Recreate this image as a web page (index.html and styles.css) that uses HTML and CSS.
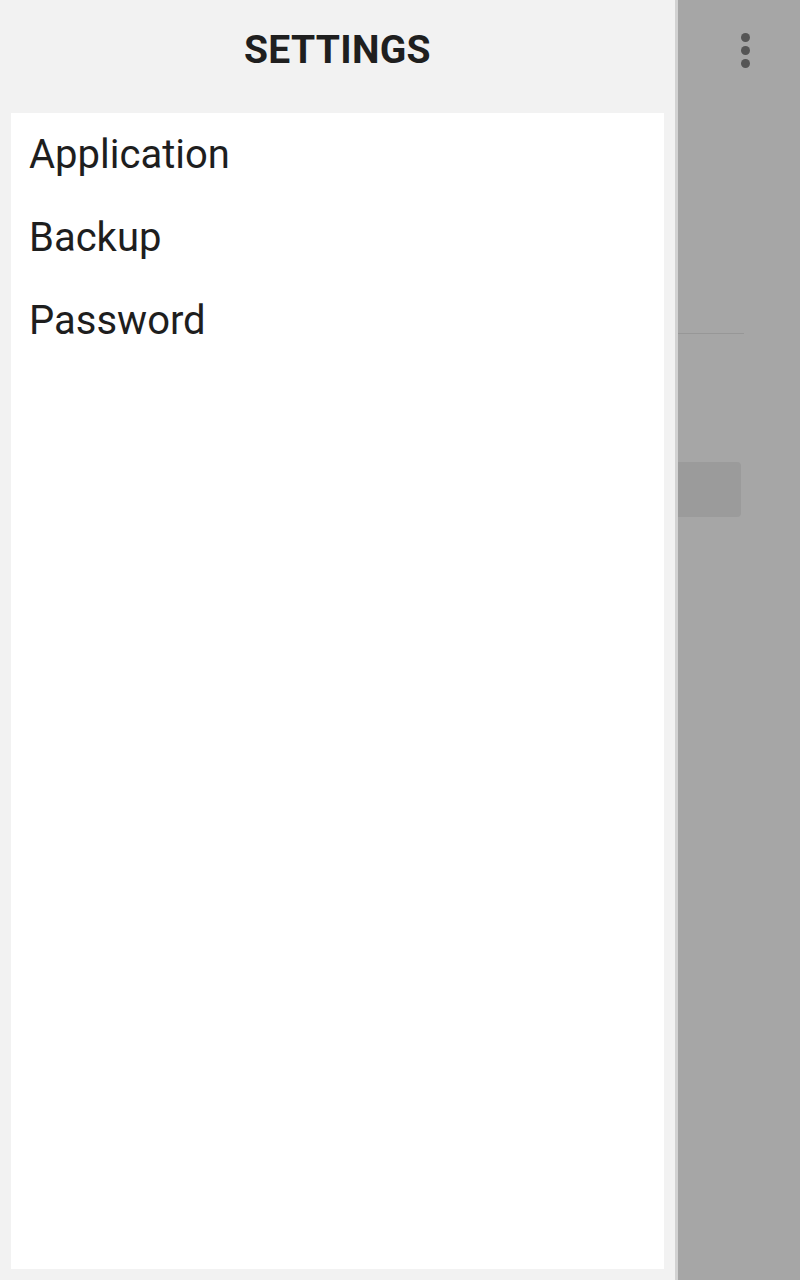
FILE: index.html
```html
<!DOCTYPE html>
<html>
<head>
<meta charset="utf-8">
<link rel="stylesheet" href="styles.css">
</head>
<body>
<div class="screen">
  <aside class="drawer">
    <header class="drawer-header">SETTINGS</header>
    <nav class="drawer-card">
      <div class="item">Application</div>
      <div class="item">Backup</div>
      <div class="item">Password</div>
    </nav>
  </aside>
  <div class="edge"></div>
  <main class="behind">
    <div class="toolbar">
      <span class="dots"><i></i><i></i><i></i></span>
    </div>
    <div class="rule"></div>
    <div class="button"></div>
  </main>
</div>
</body>
</html>
```

FILE: styles.css
```css
html, body {
  margin: 0;
  padding: 0;
}
body {
  width: 800px;
  height: 1280px;
  overflow: hidden;
  font-family: Roboto, "Liberation Sans", sans-serif;
  background: #a6a6a6;
}
.screen {
  display: flex;
  height: 1280px;
}
.drawer {
  width: 675px;
  flex: none;
  background: #f2f2f2;
  display: flex;
  flex-direction: column;
}
.drawer-header {
  height: 113px;
  display: flex;
  align-items: center;
  justify-content: center;
  font-weight: 700;
  font-size: 39px;
  color: #1f1f1f;
  letter-spacing: 0.3px;
  box-sizing: border-box;
  padding-bottom: 13px;
}
.drawer-card {
  background: #ffffff;
  margin: 0 11px 11px 11px;
  flex: 1;
  padding-top: 18px;
}
.item {
  font-size: 40px;
  color: #1e1e1e;
  padding-left: 18px;
  height: 83px;
  line-height: 48px;
}
.edge {
  width: 3px;
  flex: none;
  background: #d2d2d2;
}
.behind {
  flex: 1;
  background: #a6a6a6;
  display: flex;
  flex-direction: column;
}
.toolbar {
  height: 100px;
  display: flex;
  justify-content: flex-end;
  padding-right: 50px;
  padding-top: 33px;
  box-sizing: border-box;
}
.dots {
  display: flex;
  flex-direction: column;
  gap: 4px;
}
.dots i {
  display: block;
  width: 9px;
  height: 9px;
  border-radius: 50%;
  background: #555555;
}
.rule {
  margin-top: 233px;
  height: 1px;
  width: 66px;
  background: #979797;
}
.button {
  margin-top: 128px;
  width: 63px;
  height: 55px;
  background: #9b9b9b;
  border-radius: 0 4px 4px 0;
}
```
